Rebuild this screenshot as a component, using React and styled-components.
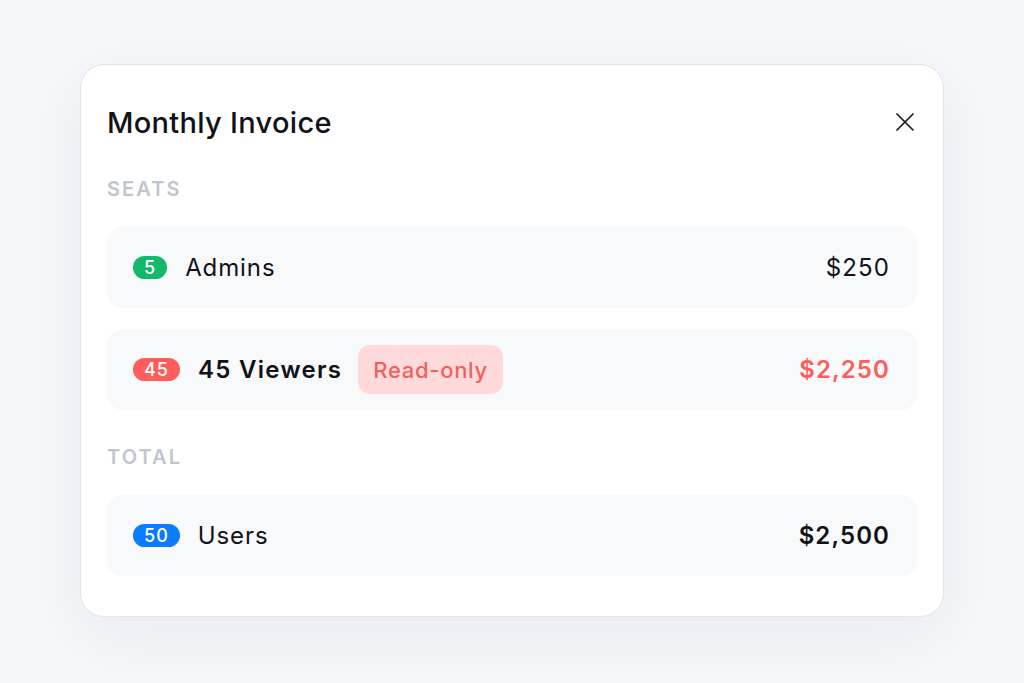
import React from 'react'
import styled, { createGlobalStyle } from 'styled-components'

const GlobalStyle = createGlobalStyle`
  * { box-sizing: border-box; }
  html, body { margin: 0; padding: 0; }
  body {
    background: #f5f6f9;
    font-family: "Inter", "Liberation Sans", sans-serif;
    color: #111318;
  }
`;

const Page = styled.div`
  width: 100vw;
  height: 100vh;
  padding-bottom: 2px;
  display: flex;
  align-items: center;
  justify-content: center;
  background: #f6f7fa;
`;

const Card = styled.div`
  width: 864px;
  background: #ffffff;
  border: 1px solid #e3e5ea;
  border-radius: 24px;
  padding: 40px 26px 40px;
  box-shadow: 0 18px 70px rgba(30, 40, 80, 0.06);
  display: flex;
  flex-direction: column;
`;

const Header = styled.div`
  display: flex;
  align-items: center;
  justify-content: space-between;
  height: 34px;
`;

const Title = styled.h1`
  margin: 0;
  font-size: 29px;
  font-weight: 500;
  letter-spacing: 0.3px;
  color: #111318;
`;

const CloseButton = styled.button`
  border: none;
  background: none;
  padding: 0;
  width: 20px;
  height: 20px;
  margin-right: 2px;
  display: flex;
  align-items: center;
  justify-content: center;
  cursor: pointer;
  color: #1a1c20;
`;

const SectionLabel = styled.div`
  font-size: 20px;
  line-height: 24px;
  font-weight: 600;
  letter-spacing: 2.1px;
  color: #c1c5cd;
  margin-top: ${p => p.$top}px;
  margin-bottom: 26px;
`;

const List = styled.div`
  display: flex;
  flex-direction: column;
  gap: 21px;
`;

const Row = styled.div`
  height: 81px;
  border-radius: 16px;
  background: #f8f9fb;
  padding: 0 27px 0 26px;
  display: flex;
  align-items: center;
  justify-content: space-between;
`;

const Left = styled.div`
  display: flex;
  align-items: center;
`;

const Badge = styled.span`
  min-width: 34px;
  height: 23px;
  padding: 0 11px;
  border-radius: 12px;
  background: ${p => p.$color};
  color: #ffffff;
  font-size: 18px;
  font-weight: 500;
  letter-spacing: 1px;
  display: inline-flex;
  align-items: center;
  justify-content: center;
  margin-right: 18px;
`;

const Name = styled.span`
  font-size: 24px;
  font-weight: ${p => (p.$strong ? 600 : 400)};
  letter-spacing: ${p => (p.$strong ? 1.3 : 0.9)}px;
  color: #111318;
`;

const Tag = styled.span`
  margin-left: 16px;
  height: 49px;
  padding: 0 15px;
  border-radius: 12px;
  background: #ffdada;
  color: #f35f5f;
  font-size: 22px;
  font-weight: 500;
  letter-spacing: 0.7px;
  display: inline-flex;
  align-items: center;
`;

const Amount = styled.span`
  font-size: 24px;
  font-weight: ${p => p.$weight || 400};
  letter-spacing: 1.1px;
  color: ${p => p.$color || '#111318'};
`;

const seats = [
  { count: 5, color: '#14b86a', name: 'Admins', amount: '$250' },
  { count: 45, color: '#ff5c5c', name: '45 Viewers', strong: true, tag: 'Read-only', amount: '$2,250', amountColor: '#ff5c5c', weight: 600 },
]

const CloseIcon = () => (
  <svg width="20" height="20" viewBox="0 0 20 20" fill="none" stroke="currentColor" strokeWidth="1.7" strokeLinecap="round">
    <line x1="2" y1="2" x2="18" y2="18" />
    <line x1="18" y1="2" x2="2" y2="18" />
  </svg>
)

const App = () => {
  return (
    <>
      <GlobalStyle />
      <Page>
        <Card>
          <Header>
            <Title>Monthly Invoice</Title>
            <CloseButton aria-label="Close"><CloseIcon /></CloseButton>
          </Header>

          <SectionLabel $top={38}>SEATS</SectionLabel>
          <List>
            {seats.map(s => (
              <Row key={s.name}>
                <Left>
                  <Badge $color={s.color}>{s.count}</Badge>
                  <Name $strong={s.strong}>{s.name}</Name>
                  {s.tag && <Tag>{s.tag}</Tag>}
                </Left>
                <Amount $color={s.amountColor} $weight={s.weight}>{s.amount}</Amount>
              </Row>
            ))}
          </List>

          <SectionLabel $top={35}>TOTAL</SectionLabel>
          <Row>
            <Left>
              <Badge $color="#0a7cff">50</Badge>
              <Name>Users</Name>
            </Left>
            <Amount $weight={600}>$2,500</Amount>
          </Row>
        </Card>
      </Page>
    </>
  )
}

export default App
